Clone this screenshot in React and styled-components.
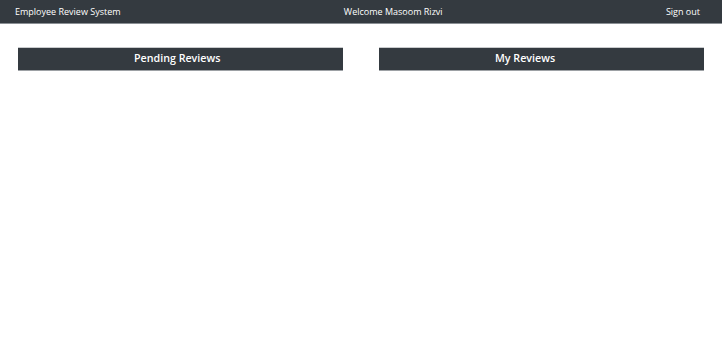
import React from "react";
import styled, { createGlobalStyle } from "styled-components";

const Global = createGlobalStyle`
  html, body { margin: 0; padding: 0; background: #fff; }
  body { font-family: "Open Sans", "DejaVu Sans", sans-serif; }
`;

const NavBar = styled.header`
  display: flex;
  justify-content: space-between;
  align-items: center;
  height: 23px;
  padding: 0 22px 0 15px;
  background: #343a40;
  border-bottom: 1px solid #8a8f94;
  color: #fff;
  font-size: 9px;
`;

const NavItem = styled.span`
  white-space: nowrap;
`;

const Main = styled.main`
  display: grid;
  grid-template-columns: 1fr 1fr;
  column-gap: 36px;
  padding: 23px 18px 0;
`;

const Panel = styled.section`
  display: flex;
  flex-direction: column;
`;

const PanelHeader = styled.h2`
  margin: 0;
  box-sizing: border-box;
  height: 24px;
  display: flex;
  align-items: center;
  padding: 0 0 3px 116px;
  background: #343a40;
  border-top: 1px solid #c9cbcd;
  border-bottom: 1px solid #9da1a5;
  color: #fff;
  font-size: 10.7px;
  font-weight: 600;
`;

export default function App() {
  return (
    <>
      <Global />
      <NavBar>
        <NavItem>Employee Review System</NavItem>
        <NavItem>Welcome Masoom Rizvi</NavItem>
        <NavItem>Sign out</NavItem>
      </NavBar>
      <Main>
        <Panel>
          <PanelHeader>Pending Reviews</PanelHeader>
        </Panel>
        <Panel>
          <PanelHeader>My Reviews</PanelHeader>
        </Panel>
      </Main>
    </>
  );
}
